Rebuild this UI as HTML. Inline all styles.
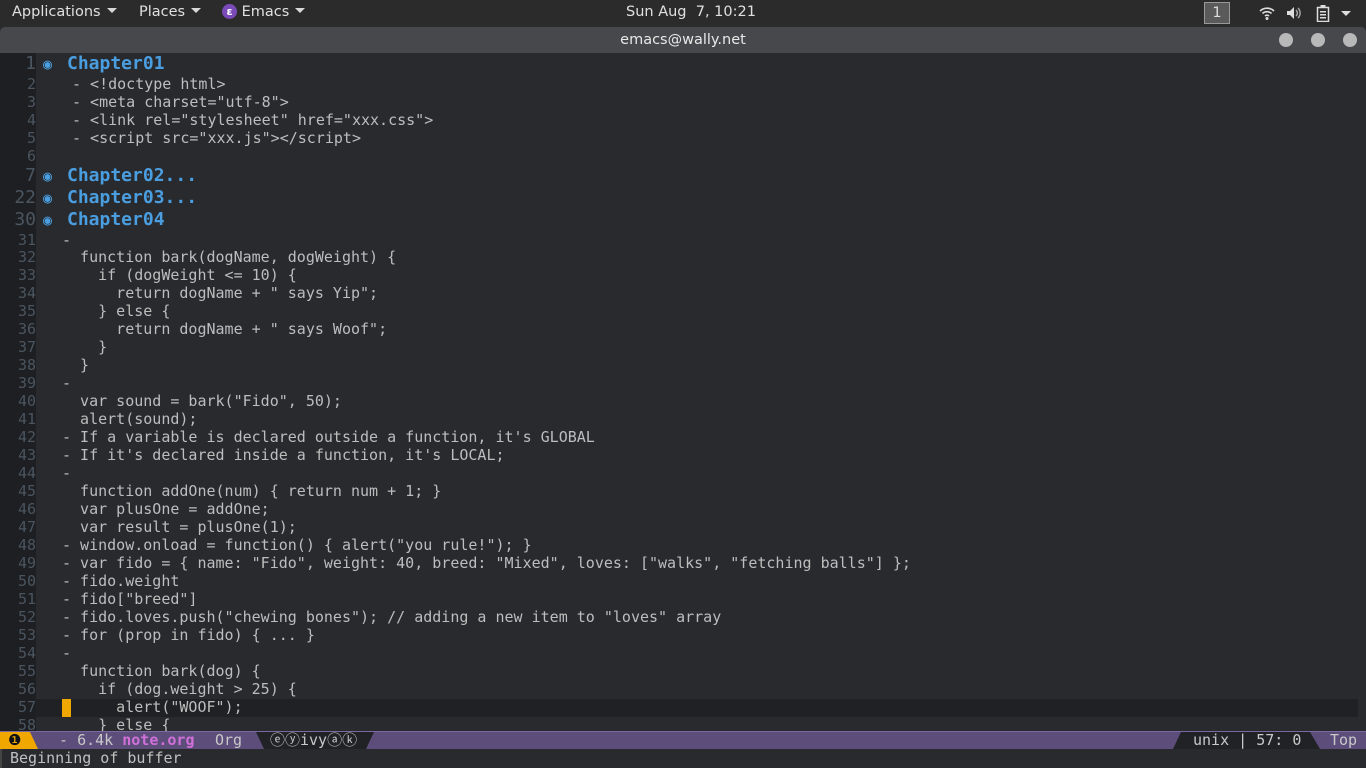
<!DOCTYPE html>
<html><head><meta charset="utf-8">
<style>
*{margin:0;padding:0;box-sizing:border-box}
body{width:1366px;height:768px;overflow:hidden;background:#282a2e;position:relative;font-family:"DejaVu Sans Mono","Liberation Mono",monospace;}
#top{position:absolute;left:0;top:0;width:1366px;height:27px;background:#2b2b2b;color:#e0e0e0;font:14.5px "DejaVu Sans","Liberation Sans",sans-serif;}
#top span{position:absolute;top:4px}
.tri{display:inline-block;width:0;height:0;border-left:5px solid transparent;border-right:5px solid transparent;border-top:5px solid #d8d8d8;margin-left:6px;vertical-align:3px}
#title{position:absolute;left:0;top:27px;width:1366px;height:26px;background:#46484b;border-radius:5px 5px 0 0;color:#e8e8e8;font:14.5px "DejaVu Sans","Liberation Sans",sans-serif;text-align:center;line-height:26px}
.dot{position:absolute;top:33px;width:14px;height:14px;border-radius:50%;background:#b8b8b8}
#gut{position:absolute;left:0;top:53px;width:36px;height:678px;background:#1d1f22}
.ln{position:absolute;left:0;width:36px;text-align:right;color:#4b5560;font-size:15px;line-height:18px;overflow:hidden;white-space:pre}
.l{position:absolute;left:0;font-size:15px;line-height:18px;color:#bdbdbd;white-space:pre}
.h{position:absolute;left:67px;font-size:18px;font-weight:bold;color:#4a9ee0;line-height:22px;white-space:pre}
.b{position:absolute;left:43px;font-size:15px;color:#4a9ee0;line-height:22px}
#ml{position:absolute;left:0;top:731px;width:1366px;height:18px;background:#5d4d7a;border-top:1px solid #7a68a0;font-size:15px;line-height:17px;color:#c8c8c8;white-space:pre}
#echo{position:absolute;left:0;top:749px;width:1366px;height:19px;background:#282a2e;color:#c0c0c0;font-size:15px;line-height:19px;padding-left:8px;border-left:2px solid #444}
</style></head><body>
<div id="top">
<span style="left:12px">Applications<i class="tri"></i></span>
<span style="left:139px">Places<i class="tri"></i></span>
<span style="left:222px"><b style="display:inline-block;width:15px;height:15px;border-radius:50%;background:#7a4bb8;color:#fff;font-size:11px;text-align:center;line-height:15px;vertical-align:1px">ε</b> Emacs<i class="tri"></i></span>
<span style="left:626px">Sun Aug &nbsp;7, 10:21</span>
<span style="left:1204px;top:2px;width:26px;height:22px;border:1px solid #999;background:#5a5a5a;text-align:center;line-height:20px;color:#ddd">1</span>
<span style="left:1259px;top:5px"><svg width="16" height="16" viewBox="0 0 16 16"><path d="M1 6a10 10 0 0 1 14 0M3.5 8.5a6.5 6.5 0 0 1 9 0M6 11a3 3 0 0 1 4 0" stroke="#ddd" stroke-width="1.6" fill="none"/><circle cx="8" cy="13.5" r="1.5" fill="#ddd"/></svg></span>
<span style="left:1286px;top:5px"><svg width="16" height="16" viewBox="0 0 16 16"><path d="M1 6h3l4-4v12l-4-4H1z" fill="#ddd"/><path d="M10 5a4 4 0 0 1 0 6M12 3a7 7 0 0 1 0 10" stroke="#aaa" stroke-width="1.4" fill="none"/></svg></span>
<span style="left:1316px;top:5px"><svg width="14" height="17" viewBox="0 0 14 17"><rect x="1.5" y="2.5" width="11" height="14" fill="none" stroke="#ddd" stroke-width="1.5"/><rect x="4.5" y="0" width="5" height="2.5" fill="#ddd"/><rect x="4" y="6" width="6" height="1.5" fill="#ddd"/><rect x="4" y="9" width="6" height="1.5" fill="#ddd"/><rect x="4" y="12" width="6" height="1.5" fill="#ddd"/></svg></span>
<span style="left:1341px;top:11px;width:0;height:0;border-left:5px solid transparent;border-right:5px solid transparent;border-top:5px solid #ddd"></span>
</div>
<div id="title">emacs@wally.net</div>
<div class="dot" style="left:1279px"></div><div class="dot" style="left:1311px"></div><div class="dot" style="left:1343px"></div>
<div id="gut"></div>
<div style="position:absolute;left:36px;top:699px;width:1322px;height:18px;background:#1f2124"></div>
<div id="lines"></div>
<div style="position:absolute;left:62px;top:699px;width:9px;height:18px;background:#f0a800"></div>
<div id="ml"><span style="position:absolute;left:0;top:0;width:38px;height:17px;background:#f0a800;color:#111;padding-left:8px;clip-path:polygon(0 0,30px 0,38px 17px,0 17px)">❶</span><span style="position:absolute;left:50px"> - 6.4k <b style="color:#d070d8">note.org</b></span><span style="position:absolute;left:205px;width:58px;height:17px;background:#5d4d7a;color:#c8c8c8;padding-left:10px">Org</span><span style="position:absolute;left:256px;width:118px;height:17px;background:#212226;clip-path:polygon(0 0,118px 0,110px 17px,8px 17px);padding-left:14px;color:#c8c8c8">ⓔⓨivyⓐⓚ</span><span style="position:absolute;left:1173px;width:147px;height:17px;background:#212226;clip-path:polygon(8px 0,137px 0,147px 17px,0 17px);padding-left:20px">unix | 57: 0</span><span style="position:absolute;left:1330px">Top</span></div>
<div id="echo">Beginning of buffer</div>
<script>
var L=document.getElementById('lines'),h='';
function ln(n,y){h+='<div class="ln" style="top:'+(y-9)+'px">'+n+'</div>';}
var hd=[[1,64,'Chapter01'],[7,176,'Chapter02...'],[22,198,'Chapter03...'],[30,220,'Chapter04']];
hd.forEach(function(a){h+='<div class="ln" style="top:'+(a[1]-10)+'px;font-size:18px;line-height:20px">'+a[0]+'</div><div class="b" style="top:'+(a[1]-11)+'px">◉</div><div class="h" style="top:'+(a[1]-11)+'px">'+a[2]+'</div>';});
var ch=[[2,84,'- &lt;!doctype html&gt;'],[3,102,'- &lt;meta charset="utf-8"&gt;'],[4,120,'- &lt;link rel="stylesheet" href="xxx.css"&gt;'],[5,138,'- &lt;script src="xxx.js"&gt;&lt;/script&gt;'],[6,156,'']];
ch.forEach(function(a){ln(a[0],a[1]);h+='<div class="l" style="left:72px;top:'+(a[1]-9)+'px">'+a[2]+'</div>';});
var code=['-','  function bark(dogName, dogWeight) {','    if (dogWeight &lt;= 10) {','      return dogName + " says Yip";','    } else {','      return dogName + " says Woof";','    }','  }','-','  var sound = bark("Fido", 50);','  alert(sound);',"- If a variable is declared outside a function, it's GLOBAL","- If it's declared inside a function, it's LOCAL;",'-','  function addOne(num) { return num + 1; }','  var plusOne = addOne;','  var result = plusOne(1);','- window.onload = function() { alert("you rule!"); }','- var fido = { name: "Fido", weight: 40, breed: "Mixed", loves: ["walks", "fetching balls"] };','- fido.weight','- fido["breed"]','- fido.loves.push("chewing bones"); // adding a new item to "loves" array','- for (prop in fido) { ... }','-','  function bark(dog) {','    if (dog.weight &gt; 25) {','      alert("WOOF");','    } else {'];
code.forEach(function(c,i){var n=31+i,y=240;if(n>=32)y=257+(n-32)*18;ln(n,y);h+='<div class="l" style="left:62px;top:'+(y-9)+'px">'+c+'</div>';});
L.innerHTML=h;
</script>
</body></html>
